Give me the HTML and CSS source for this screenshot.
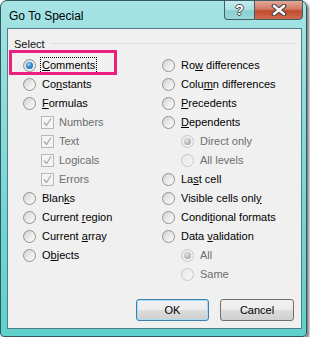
FILE: index.html
```html
<!DOCTYPE html>
<html lang="en">
<head>
    <meta charset="UTF-8">
    <title>Go To Special</title>
    <link rel="stylesheet" href="styles.css">
</head>
<body>
    <div class="window">
        <div class="titlebar">
            <span class="title">Go To Special</span>
            <div class="caption-buttons">
                <div class="cap-btn help">?</div>
                <div class="cap-btn close">
                    <svg width="16" height="12" viewBox="0 0 16 12">
                        <path d="M3 2 L13 10 M13 2 L3 10" stroke="#3c3c3c" stroke-width="4.6" stroke-linecap="round"/>
                        <path d="M3 2 L13 10 M13 2 L3 10" stroke="#ffffff" stroke-width="2.6" stroke-linecap="round"/>
                    </svg>
                </div>
            </div>
        </div>

        <div class="client">
            <div class="group-head">
                <span>Select</span>
                <div class="group-line"></div>
            </div>

            <div class="options">
                <div class="col">
                    <div class="opt">
                        <span class="radio checked"></span>
                        <span class="label focus"><u>C</u>omments</span>
                        <div class="highlight"></div>
                    </div>
                    <div class="opt"><span class="radio"></span><span class="label">Co<u>n</u>stants</span></div>
                    <div class="opt"><span class="radio"></span><span class="label"><u>F</u>ormulas</span></div>
                    <div class="opt sub disabled"><span class="check"><svg width="11" height="11" viewBox="0 0 11 11"><path d="M2 5.5 L4.5 8.5 L9 1.5" fill="none" stroke="#a9a9a9" stroke-width="1.3"/></svg></span><span class="label">Numbers</span></div>
                    <div class="opt sub disabled"><span class="check"><svg width="11" height="11" viewBox="0 0 11 11"><path d="M2 5.5 L4.5 8.5 L9 1.5" fill="none" stroke="#a9a9a9" stroke-width="1.3"/></svg></span><span class="label">Text</span></div>
                    <div class="opt sub disabled"><span class="check"><svg width="11" height="11" viewBox="0 0 11 11"><path d="M2 5.5 L4.5 8.5 L9 1.5" fill="none" stroke="#a9a9a9" stroke-width="1.3"/></svg></span><span class="label">Logicals</span></div>
                    <div class="opt sub disabled"><span class="check"><svg width="11" height="11" viewBox="0 0 11 11"><path d="M2 5.5 L4.5 8.5 L9 1.5" fill="none" stroke="#a9a9a9" stroke-width="1.3"/></svg></span><span class="label">Errors</span></div>
                    <div class="opt"><span class="radio"></span><span class="label">Blan<u>k</u>s</span></div>
                    <div class="opt"><span class="radio"></span><span class="label">Current <u>r</u>egion</span></div>
                    <div class="opt"><span class="radio"></span><span class="label">Current <u>a</u>rray</span></div>
                    <div class="opt"><span class="radio"></span><span class="label">O<u>b</u>jects</span></div>
                </div>
                <div class="col">
                    <div class="opt"><span class="radio"></span><span class="label">Ro<u>w</u> differences</span></div>
                    <div class="opt"><span class="radio"></span><span class="label">Colu<u>m</u>n differences</span></div>
                    <div class="opt"><span class="radio"></span><span class="label"><u>P</u>recedents</span></div>
                    <div class="opt"><span class="radio"></span><span class="label"><u>D</u>ependents</span></div>
                    <div class="opt sub disabled"><span class="radio checked"></span><span class="label">Direct only</span></div>
                    <div class="opt sub disabled"><span class="radio"></span><span class="label">All levels</span></div>
                    <div class="opt"><span class="radio"></span><span class="label">La<u>s</u>t cell</span></div>
                    <div class="opt"><span class="radio"></span><span class="label">Visible cells onl<u>y</u></span></div>
                    <div class="opt"><span class="radio"></span><span class="label">Condi<u>t</u>ional formats</span></div>
                    <div class="opt"><span class="radio"></span><span class="label">Data <u>v</u>alidation</span></div>
                    <div class="opt sub disabled"><span class="radio checked"></span><span class="label">All</span></div>
                    <div class="opt sub disabled"><span class="radio"></span><span class="label">Same</span></div>
                </div>
            </div>

            <div class="buttons">
                <button class="btn default">OK</button>
                <button class="btn">Cancel</button>
            </div>
        </div>
    </div>
</body>
</html>
```

FILE: styles.css
```css
* {
    margin: 0;
    padding: 0;
    box-sizing: border-box;
}

body {
    background-color: #ffffff;
    font-family: 'Liberation Sans', Arial, sans-serif;
}

.window {
    width: 307px;
    height: 337px;
    border: 1px solid #34575d;
    border-radius: 7px 7px 4px 4px;
    background: linear-gradient(to bottom, #a6e3e5 0%, #8ddcdc 30%, #6fd5d2 70%, #5fd1cd 100%);
    box-shadow: 2px 2px 3px rgba(0,0,0,0.55);
    padding: 0 4px 7px 6px;
}

.titlebar {
    height: 27px;
    display: flex;
    align-items: flex-start;
}

.title {
    font-size: 12px;
    color: #000;
    padding-top: 8px;
    padding-left: 2px;
}

.caption-buttons {
    margin-left: auto;
    margin-top: -1px;
    margin-right: -1px;
    display: flex;
}

.cap-btn {
    height: 20px;
    border: 1px solid #3e5f66;
    display: flex;
    justify-content: center;
    align-items: center;
}

.help {
    width: 30px;
    border-right: none;
    border-radius: 0 0 0 4px;
    background: linear-gradient(to bottom, #c4ecee 0%, #a9dfe1 50%, #88cfd0 55%, #9ad9da 100%);
    color: #fff;
    font-weight: bold;
    font-size: 14px;
    text-shadow: -1px 0 #4a4a4a, 1px 0 #4a4a4a, 0 -1px #4a4a4a, 0 1px #4a4a4a;
}

.close {
    width: 49px;
    border-radius: 0 0 4px 0;
    background: linear-gradient(to bottom, #e3a898 0%, #d27a63 45%, #c14b2f 55%, #d06a4e 100%);
}

.client {
    height: 301px;
    background-color: #f0f0f0;
    border: 1px solid #4f7f84;
    padding: 8px 0 0 0;
}

.group-head {
    display: flex;
    align-items: center;
    height: 13px;
    padding-left: 6px;
    font-size: 11px;
    color: #111;
}

.group-line {
    flex: 1;
    height: 1px;
    background-color: #d5dfe5;
    margin-left: 5px;
    margin-right: 5px;
}

.options {
    display: grid;
    grid-template-columns: 139px 1fr;
    margin-top: 6px;
    padding-left: 15px;
}

.col {
    display: flex;
    flex-direction: column;
}

.opt {
    position: relative;
    height: 19px;
    display: flex;
    align-items: center;
    font-size: 11px;
    color: #000;
}

.opt.sub {
    padding-left: 18px;
}

.col + .col .opt.sub {
    padding-left: 19px;
}

.opt.disabled {
    color: #6d6d6d;
}

.radio {
    position: relative;
    width: 13px;
    height: 13px;
    border-radius: 50%;
    border: 1px solid #8f9191;
    background: linear-gradient(135deg, #d2d3d4 0%, #eeeeee 60%, #fbfbfb 100%);
    margin-right: 4px;
    flex-shrink: 0;
}

.radio.checked::after {
    content: '';
    position: absolute;
    left: 2px;
    top: 2px;
    width: 7px;
    height: 7px;
    border-radius: 50%;
    background: radial-gradient(circle at 40% 35%, #a6dcf7 0%, #3b8fd0 40%, #0f4f8c 100%);
}

.disabled .radio {
    border-color: #c6c6c6;
    background: linear-gradient(135deg, #e8e8e8 0%, #f6f6f6 100%);
}

.disabled .radio.checked::after {
    background: radial-gradient(circle at 40% 35%, #e6e6e6 0%, #b4b4b4 60%, #9c9c9c 100%);
}

.check {
    width: 13px;
    height: 13px;
    border: 1px solid #b8b8b8;
    background-color: #f4f4f4;
    margin-right: 3px;
    display: flex;
    align-items: center;
    justify-content: center;
}

.label {
    line-height: 15px;
    padding: 0 1px;
    border: 1px solid transparent;
}

.label u {
    text-decoration-thickness: 1px;
    text-underline-offset: 1px;
}

.label.focus {
    border: 1px dotted #000;
}

.highlight {
    position: absolute;
    left: -14px;
    top: -6px;
    width: 108px;
    height: 25px;
    border: 3px solid #ea1f7e;
}

.buttons {
    display: flex;
    justify-content: flex-end;
    gap: 11px;
    margin-top: 15px;
    padding-right: 7px;
}

.btn {
    width: 74px;
    height: 22px;
    font-family: 'Liberation Sans', Arial, sans-serif;
    font-size: 11px;
    color: #000;
    border: 1px solid #707070;
    border-radius: 3px;
    background: linear-gradient(to bottom, #f2f2f2 0%, #ebebeb 50%, #dddddd 51%, #cfcfcf 100%);
}

.btn.default {
    width: 73px;
    border-color: #3c7fb1;
    box-shadow: inset 0 0 0 1px #a6dcf5;
}
```
